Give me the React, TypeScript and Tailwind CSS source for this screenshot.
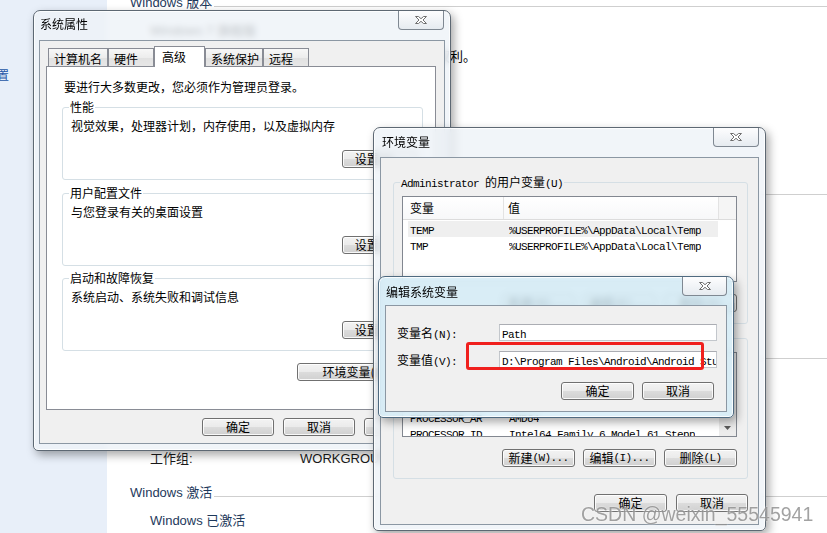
import type { ReactNode } from "react";

// ascii runs in a mono face (SimSun-like widths), the rest in the CJK face
function Mx({ t }: { t: string }) {
  const parts = t.match(/[\x20-\x7e]+|[^\x20-\x7e]+/g) ?? [];
  return (
    <>
      {parts.map((p, i) =>
        /^[\x20-\x7e]/.test(p) ? (
          <span
            key={i}
            className="whitespace-pre font-['Liberation_Mono',monospace] text-[11px] leading-[12px] tracking-[-0.6px]"
          >
            {p}
          </span>
        ) : (
          <span key={i}>{p}</span>
        ),
      )}
    </>
  );
}

function Btn({ children, className = "" }: { children: ReactNode; className?: string }) {
  return (
    <div
      className={`flex h-[18px] shrink-0 items-center justify-center whitespace-nowrap rounded-[3px] border border-[#707070] bg-[linear-gradient(#f3f3f3,#ebebeb_48%,#dcdcdc_52%,#d0d0d0)] leading-[16px] shadow-[inset_0_0_0_1px_rgba(255,255,255,0.85)] ${className}`}
    >
      {children}
    </div>
  );
}

function CloseBtn({ className = "" }: { className?: string }) {
  return (
    <div
      className={`flex h-[19px] shrink-0 items-center justify-center rounded-b-[4px] border border-t-0 border-[#7f8892] bg-[linear-gradient(#fdfdfe,#e6ebf0)] ${className}`}
    >
      <svg width="14" height="10" viewBox="0 0 14 10" aria-hidden="true">
        <path
          d="M1.5 1.5h3L7 3.7l2.5-2.2h3L9 5l3.5 3.5h-3L7 6.3 4.5 8.5h-3L5 5z"
          fill="#fff"
          stroke="#6f6f6f"
          strokeWidth="1"
          strokeLinejoin="round"
        />
      </svg>
    </div>
  );
}

function Group({
  title,
  children,
  className = "",
}: {
  title: ReactNode;
  children: ReactNode;
  className?: string;
}) {
  return (
    <fieldset className={`rounded-[3px] border border-[#d5dfe5] pb-[11px] pl-[6px] ${className}`}>
      <legend className="h-[16px] px-[1px] leading-[16px]">{title}</legend>
      {children}
    </fieldset>
  );
}

function SettingGroup({ title, desc, className = "" }: { title: string; desc: string; className?: string }) {
  return (
    <Group title={title} className={className}>
      <p className="ml-[2px] mt-[3px] leading-[16px]">{desc}</p>
      <div className="mt-[16px] flex justify-end pr-[5px]">
        <Btn className="w-[75px]">设置(S)...</Btn>
      </div>
    </Group>
  );
}

const tabs = [
  { label: "计算机名", w: "w-[60px]" },
  { label: "硬件", w: "w-[46px]" },
  { label: "高级", w: "w-[51px]", active: true },
  { label: "系统保护", w: "w-[58px]" },
  { label: "远程", w: "w-[46px]" },
];

const userVars = [
  ["TEMP", "%USERPROFILE%\\AppData\\Local\\Temp"],
  ["TMP", "%USERPROFILE%\\AppData\\Local\\Temp"],
];

const sysVars = [
  ["Path", "D:\\Program Files\\Android\\Android Studio"],
  ["PATHEXT", ".COM;.EXE;.BAT;.CMD;.VBS;.VBE;.JS"],
  ["PROCESSOR_AR", "AMD64"],
  ["PROCESSOR_ID", "Intel64 Family 6 Model 61 Stepp"],
];

function Row({ name, value, hi }: { name: string; value: string; hi?: boolean }) {
  return (
    <div className={`ml-[5px] flex h-[16px] w-[310px] items-center whitespace-nowrap ${hi ? "bg-[#efefef]" : ""}`}>
      <div className="w-[101px] shrink-0 overflow-hidden pl-[2px]">
        <Mx t={name} />
      </div>
      <div className="overflow-hidden">
        <Mx t={value} />
      </div>
    </div>
  );
}

export default function App() {
  return (
    <div className="relative h-[533px] w-[827px] overflow-hidden bg-white">
      {/* control panel page behind the dialogs */}
      <div className="flex h-full">
        <div className="w-[107px] shrink-0 bg-[#e8eff9] pt-[67px]">
          <div className="-ml-[3px] font-['Noto_Sans_CJK_SC',sans-serif] text-[12px] leading-[16px] text-[#2456a6]">
            置
          </div>
        </div>
        <div className="flex flex-1 flex-col whitespace-nowrap font-['Liberation_Sans','Noto_Sans_CJK_SC',sans-serif] text-[13px] leading-[16px] text-[#1e395b]">
          <div className="-mt-[5px] flex items-center pl-[23px]">
            <span>Windows 版本</span>
            <div className="ml-[2px] mt-[7px] h-px flex-1 bg-[#cfcfcf]" />
          </div>
          <div className="mt-[12px] pl-[43px] text-black">Windows 7 旗舰版</div>
          <div className="mt-[10px] w-[369px] text-right text-black">。保留所有权利。</div>
          <div className="mt-[118px] flex items-center pl-[23px]">
            <span>系统</span>
            <div className="ml-[2px] mt-[7px] h-px flex-1 bg-[#cfcfcf]" />
          </div>
          <div className="mt-[148px] flex items-center pl-[23px]">
            <span>计算机名称、域和工作组设置</span>
            <div className="ml-[2px] mt-[7px] h-px flex-1 bg-[#cfcfcf]" />
          </div>
          <div className="mt-[88px] flex pl-[43px] text-[#1a1a1a]">
            <span className="w-[150px]">工作组:</span>
            <span>WORKGROUP</span>
          </div>
          <div className="mt-[18px] flex items-center pl-[23px]">
            <span>Windows 激活</span>
            <div className="ml-[2px] mt-[7px] h-px flex-1 bg-[#cfcfcf]" />
          </div>
          <div className="mt-[12px] pl-[43px]">Windows 已激活</div>
        </div>
      </div>

      {/* 系统属性 */}
      <div className="absolute left-[33px] top-[10px] flex h-[441px] w-[418px] flex-col rounded-b-[5px] rounded-t-[7px] border border-[#5d6873] bg-[#eef3f8]/80 px-[5px] pb-[6px] font-['Noto_Sans_CJK_SC',sans-serif] text-[12px] leading-[16px] text-black shadow-[inset_0_0_0_1px_rgba(255,255,255,0.75),3px_4px_10px_rgba(0,0,0,0.35)] backdrop-blur-[3px]">
        <div className="flex h-[29px] shrink-0 items-start justify-between">
          <span className="mt-[5px] pl-[1px]">系统属性</span>
          <CloseBtn className="mr-[1px] w-[46px]" />
        </div>
        <div className="flex flex-1 flex-col border border-[#8b97a3] bg-[#f0f0f0]">
          <div className="ml-[6px] mt-[5px] flex h-[20px] items-end pl-[2px]">
            {tabs.map((t) =>
              t.active ? (
                <div
                  key={t.label}
                  className={`relative z-10 -mb-px h-[21px] border border-b-0 border-[#898c95] bg-white pl-[7px] leading-[20px] ${t.w}`}
                >
                  {t.label}
                </div>
              ) : (
                <div
                  key={t.label}
                  className={`h-[18px] border border-b-0 border-[#898c95] bg-[linear-gradient(#f7f7f7,#ededed_50%,#e1e1e1_51%,#e7e7e7)] pl-[5px] leading-[19px] ${t.w}`}
                >
                  {t.label}
                </div>
              ),
            )}
          </div>
          <div className="ml-[6px] h-[344px] w-[390px] border border-[#898c95] bg-white">
            <div className="ml-[15px] w-[361px]">
              <p className="ml-[2px] mt-[12px]">要进行大多数更改，您必须作为管理员登录。</p>
              <SettingGroup className="mt-[4px]" title="性能" desc="视觉效果，处理器计划，内存使用，以及虚拟内存" />
              <SettingGroup className="mt-[5px]" title="用户配置文件" desc="与您登录有关的桌面设置" />
              <SettingGroup className="mt-[4px]" title="启动和故障恢复" desc="系统启动、系统失败和调试信息" />
              <div className="mt-[12px] flex justify-end">
                <Btn className="w-[126px]">环境变量(N)...</Btn>
              </div>
            </div>
          </div>
          <div className="mt-[8px] flex justify-end gap-[9px] pr-[7px]">
            <Btn className="w-[72px]">确定</Btn>
            <Btn className="w-[72px]">取消</Btn>
            <Btn className="w-[73px] text-[#8d8d8d]">应用(A)</Btn>
          </div>
        </div>
      </div>

      {/* 环境变量 */}
      <div className="absolute left-[373px] top-[127px] flex h-[404px] w-[393px] flex-col rounded-b-[5px] rounded-t-[7px] border border-[#5d6873] bg-[#eef3f8]/80 px-[6px] pb-[5px] font-['Noto_Sans_CJK_SC',sans-serif] text-[12px] leading-[16px] text-black shadow-[inset_0_0_0_1px_rgba(255,255,255,0.75),3px_4px_10px_rgba(0,0,0,0.35)] backdrop-blur-[3px]">
        <div className="flex h-[29px] shrink-0 items-start justify-between">
          <span className="mt-[6px] pl-[2px]">环境变量</span>
          <CloseBtn className="w-[46px]" />
        </div>
        <div className="flex-1 border border-[#8b97a3] bg-[#f0f0f0]">
          <Group className="ml-[12px] mt-[16px] w-[355px]" title={<Mx t="Administrator 的用户变量(U)" />}>
            <div className="ml-[2px] mt-[6px] flex h-[86px] w-[335px] flex-col overflow-hidden border border-[#828790] bg-white">
              <div className="flex h-[23px] shrink-0 border-b border-[#dcdcdc] bg-[linear-gradient(#ffffff,#f7f8f9)] leading-[22px]">
                <div className="w-[101px] border-r border-[#e3e3e3] pl-[7px]">变量</div>
                <div className="w-[215px] border-r border-[#e3e3e3] pl-[4px]">值</div>
                <div className="flex-1 bg-[#f5f5f5]" />
              </div>
              <div className="mt-[1px]">
                {userVars.map(([n, v], i) => (
                  <Row key={n} name={n} value={v} hi={i === 0} />
                ))}
              </div>
            </div>
            <div className="mt-[12px] flex justify-end gap-[8px] pr-[10px]">
              <Btn className="w-[73px]">
                <Mx t="新建(N)..." />
              </Btn>
              <Btn className="w-[73px]">
                <Mx t="编辑(E)..." />
              </Btn>
              <Btn className="w-[73px]">
                <Mx t="删除(D)" />
              </Btn>
            </div>
          </Group>
          <Group className="ml-[12px] mt-[6px] w-[355px]" title={<Mx t="系统变量(S)" />}>
            <div className="ml-[2px] mt-[6px] flex h-[85px] w-[335px] overflow-hidden border border-[#828790] bg-white">
              <div className="flex w-[316px] flex-col">
                <div className="flex h-[23px] shrink-0 border-b border-[#dcdcdc] bg-[linear-gradient(#ffffff,#f7f8f9)] leading-[22px]">
                  <div className="w-[101px] border-r border-[#e3e3e3] pl-[7px]">变量</div>
                  <div className="flex-1 border-r border-[#e3e3e3] pl-[4px]">值</div>
                </div>
                <div className="mt-[1px]">
                  {sysVars.map(([n, v]) => (
                    <Row key={n} name={n} value={v} />
                  ))}
                </div>
              </div>
              <div className="flex w-[17px] flex-col justify-end bg-[#ececec]">
                <div className="flex h-[17px] items-center justify-center">
                  <svg width="7" height="4" viewBox="0 0 7 4" aria-hidden="true">
                    <path d="M0 0h7L3.5 4z" fill="#5a5a5a" />
                  </svg>
                </div>
              </div>
            </div>
            <div className="mt-[12px] flex justify-end gap-[8px] pr-[10px]">
              <Btn className="w-[73px]">
                <Mx t="新建(W)..." />
              </Btn>
              <Btn className="w-[73px]">
                <Mx t="编辑(I)..." />
              </Btn>
              <Btn className="w-[73px]">
                <Mx t="删除(L)" />
              </Btn>
            </div>
          </Group>
          <div className="ml-[12px] mt-[15px] flex w-[355px] justify-end gap-[9px]">
            <Btn className="w-[73px]">确定</Btn>
            <Btn className="w-[72px]">取消</Btn>
          </div>
        </div>
      </div>

      {/* 编辑系统变量 */}
      <div className="absolute left-[378px] top-[276px] flex h-[142px] w-[356px] flex-col rounded-b-[5px] rounded-t-[7px] border border-[#4f6a80] bg-[#d3ecf8]/80 px-[6px] pb-[5px] font-['Noto_Sans_CJK_SC',sans-serif] text-[12px] leading-[16px] text-black shadow-[inset_0_0_0_1px_rgba(255,255,255,0.8),3px_4px_10px_rgba(0,0,0,0.35)] backdrop-blur-[3px]">
        <div className="flex h-[28px] shrink-0 items-start justify-between">
          <span className="mt-[7px] pl-[1px]">编辑系统变量</span>
          <CloseBtn className="w-[45px]" />
        </div>
        <div className="relative flex-1 border border-[#8b97a3] bg-[#f0f0f0] pt-[18px]">
          <div className="flex h-[17px] items-center pl-[11px]">
            <span className="w-[102px]">
              <Mx t="变量名(N):" />
            </span>
            <div className="h-[17px] w-[218px] overflow-hidden whitespace-nowrap border border-[#c3c7cc] border-t-[#abadb3] bg-white pl-[2px] leading-[15px]">
              <Mx t="Path" />
            </div>
          </div>
          <div className="mt-[10px] flex h-[17px] items-center pl-[11px]">
            <span className="w-[102px]">
              <Mx t="变量值(V):" />
            </span>
            <div className="h-[17px] w-[218px] overflow-hidden whitespace-nowrap border border-[#c3c7cc] border-t-[#abadb3] bg-white pl-[2px] leading-[15px]">
              <Mx t="D:\Program Files\Android\Android Studio\bin" />
            </div>
          </div>
          <div className="mt-[14px] flex justify-end gap-[8px] pr-[12px]">
            <Btn className="w-[73px]">确定</Btn>
            <Btn className="w-[72px]">取消</Btn>
          </div>
          {/* red annotation box */}
          <div className="absolute left-[80px] top-[36px] h-[28px] w-[238px] rounded-[3px] border-[3px] border-[#f0201e]" />
        </div>
      </div>

      {/* watermark */}
      <div className="absolute left-[581px] top-[503px] whitespace-nowrap font-['Liberation_Sans',sans-serif] text-[19.5px] leading-[22px] text-[#7a7a7a]/70 [text-shadow:0_0_2px_rgba(255,255,255,0.9)]">
        CSDN @weixin_55545941
      </div>
    </div>
  );
}
